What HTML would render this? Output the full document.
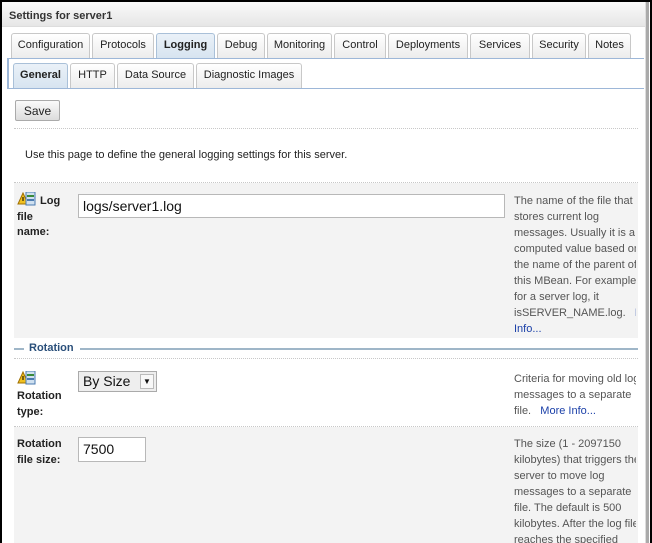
<!DOCTYPE html>
<html><head><style>
*{margin:0;padding:0;box-sizing:border-box}
body{width:652px;height:543px;overflow:hidden;background:#000;font-family:"Liberation Sans",sans-serif;position:relative}
.frame{position:absolute;left:2px;top:2px;width:648px;height:541px;background:#fff;overflow:hidden}
.a{position:absolute}
.title{left:0;top:0;width:643px;height:25px;background:linear-gradient(#fafafa,#e6e6e6);border-bottom:1px solid #ddd;font-size:11px;font-weight:bold;color:#333;padding:8px 0 0 7px}
.rb{left:643px;top:0;width:4px;height:541px;background:#aaa;border-left:1px solid #ddd}
.tab{position:absolute;height:25px;border:1px solid #c8c8c8;border-bottom:none;border-radius:3px 3px 0 0;background:linear-gradient(#fff,#ececec);font-size:11px;color:#222;text-align:center;padding-top:5px}
.tab.on{background:linear-gradient(#eaf1f8,#d7e4f0);border-color:#a9c0d8;font-weight:bold}
.hl{position:absolute;height:1px;background:#9db7d8}
.dot{position:absolute;left:12px;width:624px;border-top:1px dotted #c8c8c8}
.help{position:absolute;font-size:11px;line-height:16px;color:#555;width:122px;white-space:nowrap;overflow:hidden}
.help a{color:#1a3fa8;text-decoration:none}
.lbl{position:absolute;font-size:11px;font-weight:bold;color:#222;line-height:16px}
.inp{position:absolute;background:#fff;border:1px solid #b8b8b8;font-size:14px;color:#111;padding:3px 4px}
.ic{display:inline-block;vertical-align:-3px}
</style></head><body>
<div class="frame">
<div class="a title">Settings for server1</div>
<div class="a rb"></div>

<div class="tab" style="left:9px;top:31px;width:79px">Configuration</div>
<div class="tab" style="left:90px;top:31px;width:62px">Protocols</div>
<div class="tab on" style="left:154px;top:31px;width:59px">Logging</div>
<div class="tab" style="left:215px;top:31px;width:48px">Debug</div>
<div class="tab" style="left:265px;top:31px;width:65px">Monitoring</div>
<div class="tab" style="left:332px;top:31px;width:52px">Control</div>
<div class="tab" style="left:386px;top:31px;width:80px">Deployments</div>
<div class="tab" style="left:468px;top:31px;width:60px">Services</div>
<div class="tab" style="left:530px;top:31px;width:54px">Security</div>
<div class="tab" style="left:586px;top:31px;width:43px">Notes</div>
<div class="hl" style="left:5px;top:56px;width:637px"></div>
<div class="a" style="left:5px;top:56px;width:2px;height:31px;background:#9db7d8"></div>

<div class="tab on" style="left:11px;top:61px;width:55px">General</div>
<div class="tab" style="left:68px;top:61px;width:45px">HTTP</div>
<div class="tab" style="left:115px;top:61px;width:77px">Data Source</div>
<div class="tab" style="left:194px;top:61px;width:106px">Diagnostic Images</div>
<div class="hl" style="left:5px;top:86px;width:637px"></div>

<div class="a" style="left:13px;top:98px;width:45px;height:21px;border:1px solid #aaa;border-radius:2px;background:linear-gradient(#fafafa,#dcdcdc);font-size:12px;text-align:center;padding-top:3px;color:#222">Save</div>
<div class="dot" style="top:126px"></div>
<div class="a" style="left:23px;top:147px;font-size:11px;color:#222">Use this page to define the general logging settings for this server.</div>
<div class="dot" style="top:180px"></div>

<div class="a" style="left:12px;top:181px;width:624px;height:155px;background:#f3f3f3"></div>
<div class="lbl" style="left:15px;top:190px;width:50px;line-height:15.5px"><svg class="ic" width="20" height="15" viewBox="0 0 20 15"><path d="M6 1L11 12H1Z" fill="#f0c020" stroke="#a07000"/><rect x="5.5" y="5" width="1" height="4" fill="#000"/><rect x="9" y="0" width="9" height="13" fill="#cfe0f0" stroke="#4a7ab0"/><rect x="10" y="3" width="7" height="2" fill="#3a8a3a"/><rect x="10" y="7" width="7" height="2" fill="#4a7ab0"/></svg> Log<br>file<br>name:</div>
<div class="inp" style="left:76px;top:192px;width:427px;height:24px">logs/server1.log</div>
<div class="help" style="left:512px;top:191px">The name of the file that<br>stores current log<br>messages. Usually it is a<br>computed value based on<br>the name of the parent of<br>this MBean. For example,<br>for a server log, it<br>isSERVER_NAME.log. &nbsp;&nbsp;<a>More</a><br><a>Info...</a></div>

<div class="a" style="left:12px;top:346px;width:10px;height:2px;background:#9fb6c8"></div>
<div class="a" style="left:27px;top:340px;font-size:11px;font-weight:bold;color:#2a4f7a">Rotation</div>
<div class="a" style="left:78px;top:346px;width:558px;height:2px;background:#9fb6c8"></div>
<div class="dot" style="top:356px"></div>

<div class="lbl" style="left:15px;top:369px;width:60px"><svg class="ic" width="20" height="15" viewBox="0 0 20 15"><path d="M6 1L11 12H1Z" fill="#f0c020" stroke="#a07000"/><rect x="5.5" y="5" width="1" height="4" fill="#000"/><rect x="9" y="0" width="9" height="13" fill="#cfe0f0" stroke="#4a7ab0"/><rect x="10" y="3" width="7" height="2" fill="#3a8a3a"/><rect x="10" y="7" width="7" height="2" fill="#4a7ab0"/></svg><br>Rotation<br>type:</div>
<div class="a" style="left:76px;top:369px;width:79px;height:21px;border:1px solid #aaa;background:#eee;font-size:14px;padding:1px 4px;color:#111">By Size<span style="position:absolute;right:2px;top:2px;width:14px;height:15px;background:#f8f8f8;border:1px solid #bbb;font-size:8px;text-align:center;line-height:14px">▼</span></div>
<div class="help" style="left:512px;top:369px">Criteria for moving old log<br>messages to a separate<br>file. &nbsp;&nbsp;<a>More Info...</a></div>
<div class="dot" style="top:424px"></div>

<div class="a" style="left:12px;top:425px;width:624px;height:120px;background:#f3f3f3"></div>
<div class="lbl" style="left:15px;top:434px">Rotation<br>file size:</div>
<div class="inp" style="left:76px;top:435px;width:68px;height:25px">7500</div>
<div class="help" style="left:512px;top:434px">The size (1 - 2097150<br>kilobytes) that triggers the<br>server to move log<br>messages to a separate<br>file. The default is 500<br>kilobytes. After the log file<br>reaches the specified</div>
</div>
</body></html>
